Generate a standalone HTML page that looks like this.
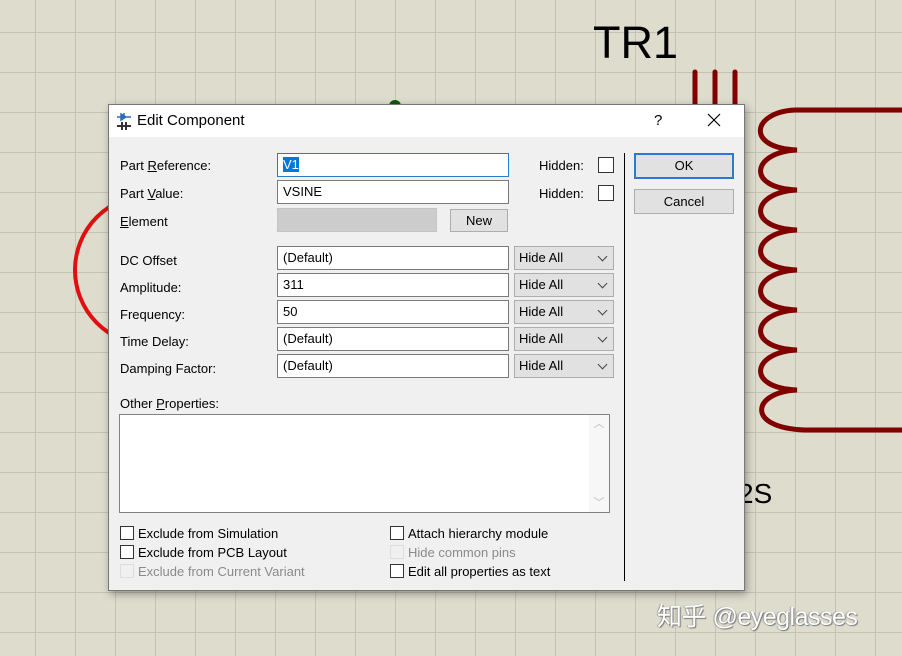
<!DOCTYPE html>
<html><head><meta charset="utf-8"><style>
*{margin:0;padding:0;box-sizing:border-box}
body{width:902px;height:656px;overflow:hidden;position:relative;font-family:"Liberation Sans",sans-serif;font-size:13px;color:#000;
background-color:#dddccd;
background-image:linear-gradient(to right,#c3c2b3 1px,transparent 1px),linear-gradient(to bottom,#c3c2b3 1px,transparent 1px);
background-size:40px 40px;background-position:35px 32px}
.a{position:absolute}
.dlg{left:108px;top:104px;width:637px;height:487px;background:#f0f0f0;border:1px solid #777;box-shadow:2px 3px 8px rgba(0,0,0,.35)}
.tb{left:0;top:0;width:635px;height:32px;background:#fff}
.in{background:#fff;border:1px solid #7a7a7a;height:24px;padding:3px 5px;font-size:13px}
.dd{background:#e1e1e1;border:1px solid #adadad;height:24px;padding:3px 4px;width:100px;font-size:13px}
.dd:after{content:"";position:absolute;right:7px;top:6px;width:6px;height:6px;border-right:1px solid #444;border-bottom:1px solid #444;transform:rotate(45deg)}
.cb{width:14px;height:14px;border:1px solid #333;background:#fff}
.btn{background:#e1e1e1;border:1px solid #adadad;text-align:center;font-size:13px}
u{text-decoration:underline}
.lb{font-size:13px}
</style></head><body>
<svg class="a" style="left:0;top:0" width="902" height="656">
<circle cx="150" cy="270" r="75" fill="none" stroke="#e01010" stroke-width="4"/>
<circle cx="395" cy="106" r="6" fill="#0a5a0a"/>
<g stroke="#800000" stroke-width="5" fill="none" stroke-linecap="round">
<line x1="695" y1="72" x2="695" y2="110"/><line x1="715" y1="72" x2="715" y2="110"/><line x1="735" y1="72" x2="735" y2="110"/>
<path d="M902,110 L795,110 C752,112 745,148 797,150 C752,152 745,188 797,190 C752,192 745,228 797,230 C752,232 745,268 797,270 C752,272 745,308 797,310 C752,312 745,348 797,350 C752,352 745,388 797,390 C752,392 745,428 805,430 L902,430"/>
</g>
<text x="593" y="58" font-family="Liberation Sans" font-size="45">TR1</text>
<text x="738" y="503" font-family="Liberation Sans" font-size="28">2S</text>
</svg>
<div class="a" style="left:657px;top:597px;font-family:'Liberation Sans','Noto Sans CJK SC',sans-serif;font-size:25px;color:#fff;text-shadow:1px 1px 1px #777,-1px 0 1px #999;letter-spacing:-0.5px">知乎 @eyeglasses</div>
<div class="a dlg">
<div class="a tb"></div>
<svg class="a" style="left:6px;top:6px" width="18" height="20"><path d="M2,6h14M9,2v3M6,3l5,3l-5,3z" stroke="#2a6fb5" fill="#2a6fb5" stroke-width="1.5"/><path d="M2,15h14M7,11v8M11,11v8" stroke="#333" stroke-width="2"/></svg>
<div class="a" style="left:28px;top:7px;font-size:15px">Edit Component</div>
<div class="a" style="left:545px;top:7px;font-size:15px">?</div>
<svg class="a" style="left:598px;top:8px" width="14" height="14"><path d="M1,1L13,13M13,1L1,13" stroke="#000" stroke-width="1.2"/></svg>

<div class="a lb" style="left:11px;top:53px">Part <u>R</u>eference:</div>
<div class="a lb" style="left:11px;top:81px">Part <u>V</u>alue:</div>
<div class="a lb" style="left:11px;top:109px"><u>E</u>lement</div>
<div class="a in" style="left:168px;top:48px;width:232px;border-color:#2a7ad0;padding-top:3px"><span style="background:#0078d7;color:#fff">V1</span></div>
<div class="a in" style="left:168px;top:75px;width:232px">VSINE</div>
<div class="a" style="left:168px;top:103px;width:160px;height:24px;background:#ccc;border:1px solid #c4c4c4"></div>
<div class="a btn" style="left:341px;top:104px;width:58px;height:23px;line-height:21px">New</div>
<div class="a lb" style="left:430px;top:53px">Hidden:</div>
<div class="a cb" style="left:489px;top:52px;width:16px;height:16px"></div>
<div class="a lb" style="left:430px;top:81px">Hidden:</div>
<div class="a cb" style="left:489px;top:80px;width:16px;height:16px"></div>

<div class="a lb" style="left:11px;top:148px">DC Offset</div>
<div class="a lb" style="left:11px;top:175px">Amplitude:</div>
<div class="a lb" style="left:11px;top:202px">Frequency:</div>
<div class="a lb" style="left:11px;top:229px">Time Delay:</div>
<div class="a lb" style="left:11px;top:256px">Damping Factor:</div>
<div class="a in" style="left:168px;top:141px;width:232px">(Default)</div>
<div class="a in" style="left:168px;top:168px;width:232px">311</div>
<div class="a in" style="left:168px;top:195px;width:232px">50</div>
<div class="a in" style="left:168px;top:222px;width:232px">(Default)</div>
<div class="a in" style="left:168px;top:249px;width:232px">(Default)</div>
<div class="a dd" style="left:405px;top:141px">Hide All</div>
<div class="a dd" style="left:405px;top:168px">Hide All</div>
<div class="a dd" style="left:405px;top:195px">Hide All</div>
<div class="a dd" style="left:405px;top:222px">Hide All</div>
<div class="a dd" style="left:405px;top:249px">Hide All</div>

<div class="a lb" style="left:11px;top:291px">Other <u>P</u>roperties:</div>
<div class="a" style="left:10px;top:309px;width:491px;height:99px;background:#fff;border:1px solid #828282"></div>
<div class="a" style="left:480px;top:310px;width:20px;height:97px;background:#f7f7f7;color:#bbb;font-size:11px;text-align:center">︿<div style="position:absolute;bottom:2px;width:20px">﹀</div></div>

<div class="a cb" style="left:11px;top:421px"></div><div class="a lb" style="left:29px;top:421px">Exclude from Simulation</div>
<div class="a cb" style="left:11px;top:440px"></div><div class="a lb" style="left:29px;top:440px">Exclude from PCB Layout</div>
<div class="a cb" style="left:11px;top:459px;border-color:#ddd;background:#f0f0f0"></div><div class="a lb" style="left:29px;top:459px;color:#8a8a8a">Exclude from Current Variant</div>
<div class="a cb" style="left:281px;top:421px"></div><div class="a lb" style="left:299px;top:421px">Attach hierarchy module</div>
<div class="a cb" style="left:281px;top:440px;border-color:#ddd;background:#f0f0f0"></div><div class="a lb" style="left:299px;top:440px;color:#8a8a8a">Hide common pins</div>
<div class="a cb" style="left:281px;top:459px"></div><div class="a lb" style="left:299px;top:459px">Edit all properties as text</div>

<div class="a" style="left:515px;top:48px;width:1px;height:428px;background:#000"></div>
<div class="a btn" style="left:525px;top:48px;width:100px;height:26px;line-height:22px;border:2px solid #2a7ad0">OK</div>
<div class="a btn" style="left:525px;top:84px;width:100px;height:25px;line-height:23px">Cancel</div>
</div>
</body></html>
